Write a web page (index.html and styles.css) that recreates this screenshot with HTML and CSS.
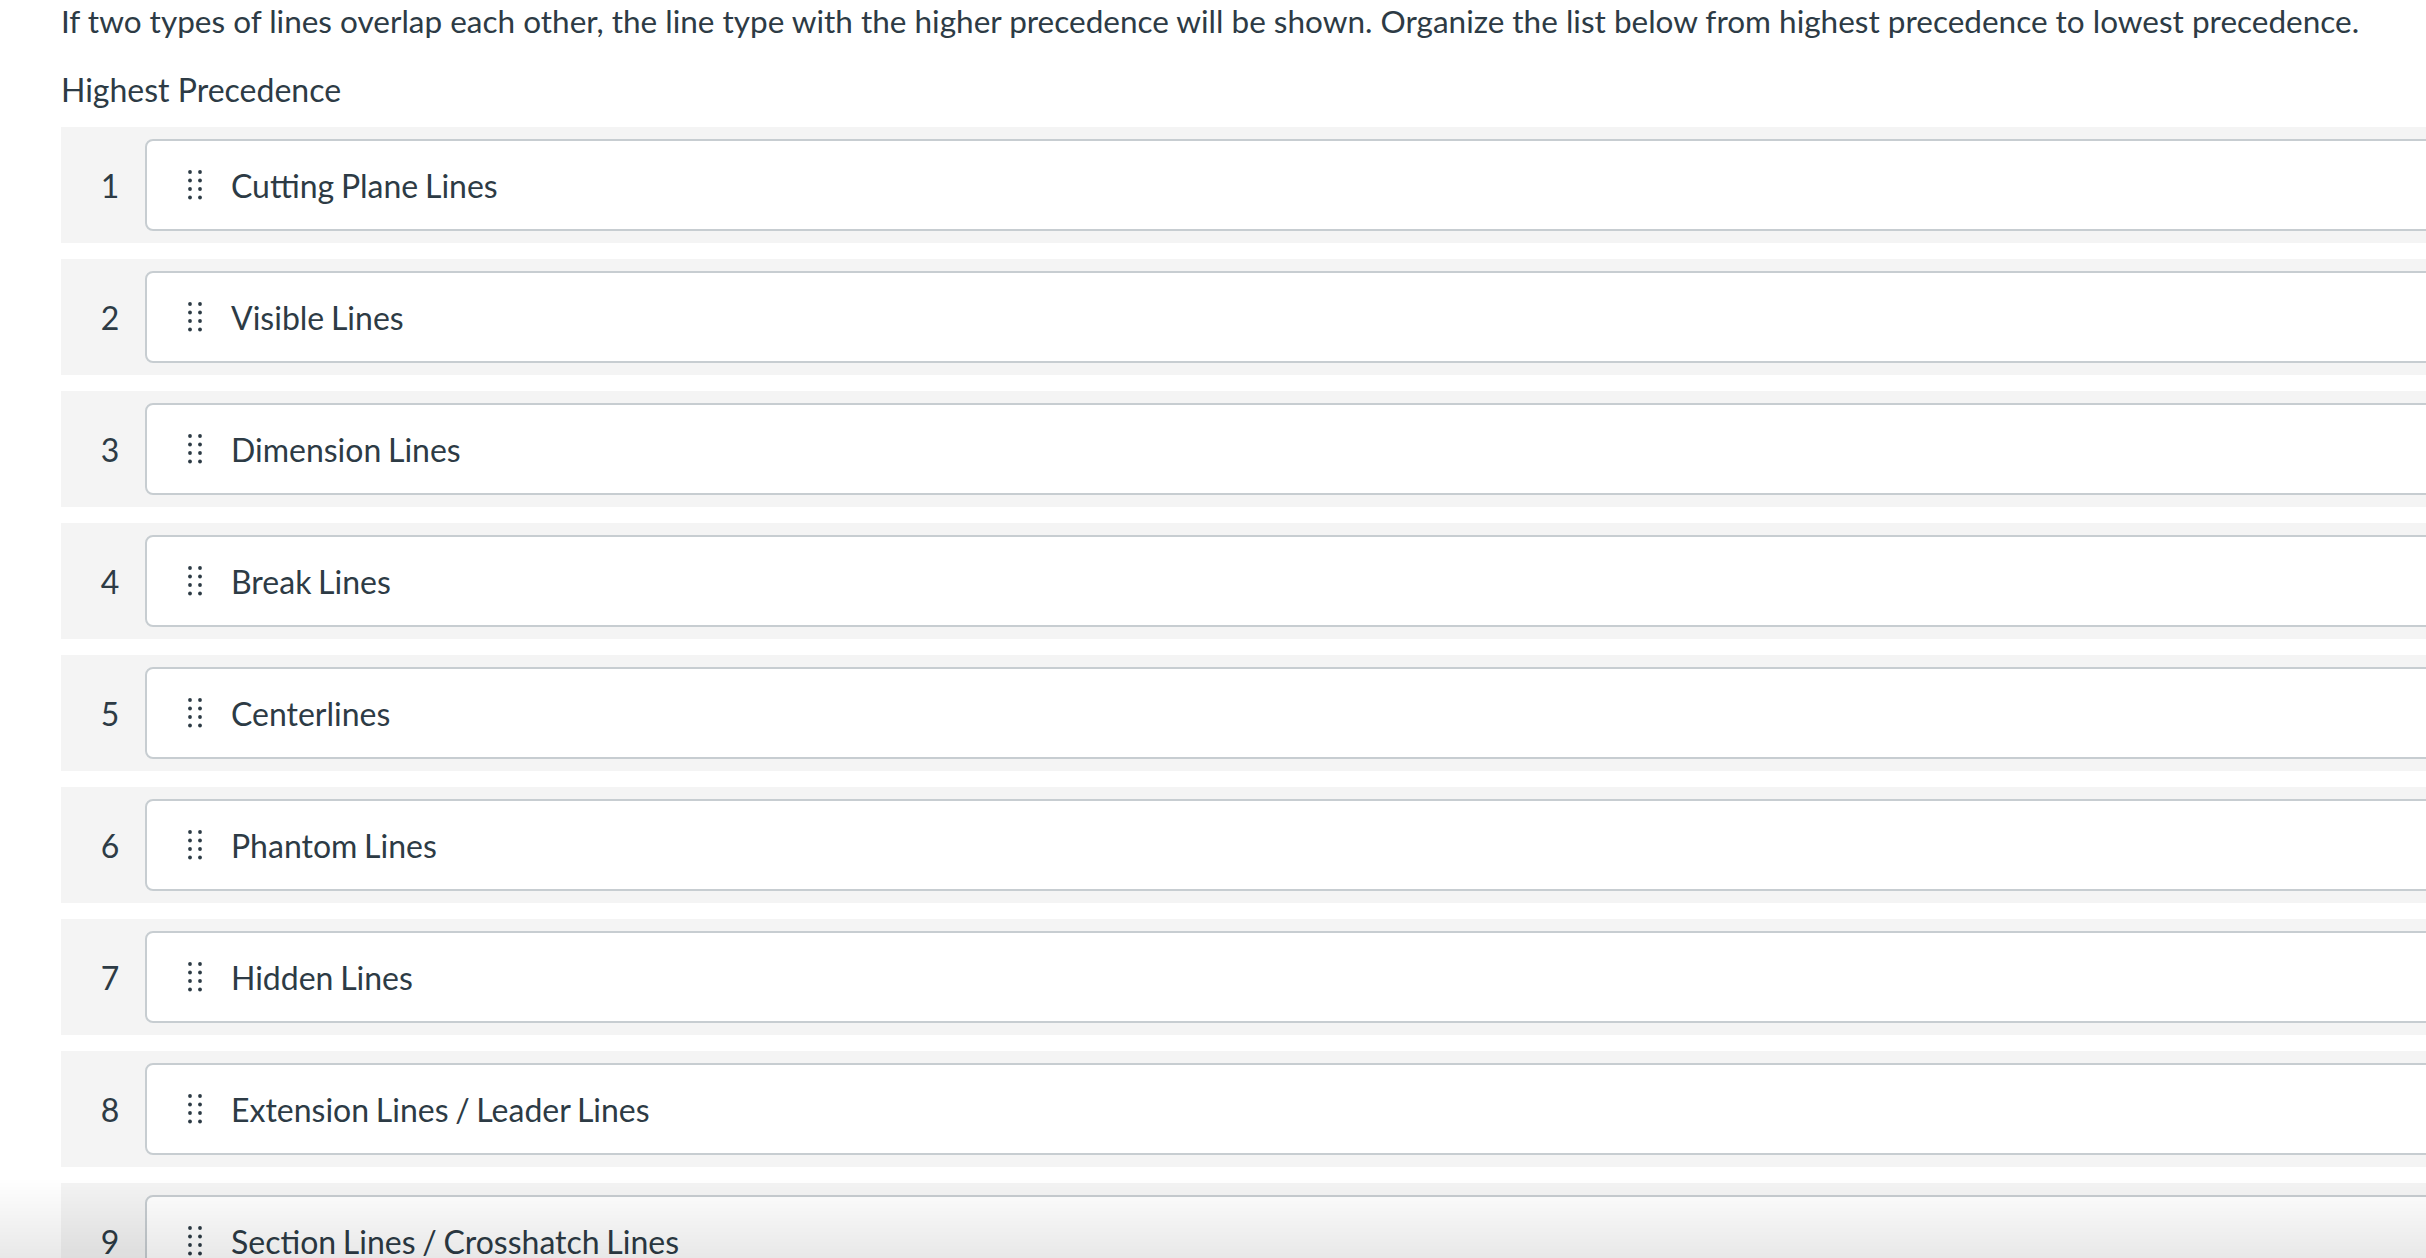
FILE: index.html
```html
<!DOCTYPE html>
<html>
<head>
	<title>Ordering question</title>
	<link rel="stylesheet" href="styles.css">
</head>
<body>
	<div class="question">
		<p class="prompt">If two types of lines overlap each other, the line type with the higher precedence will be shown. Organize the list below from highest precedence to lowest precedence.</p>
		<p class="top-label">Highest Precedence</p>
		<ol class="order-list">
			<li class="order-item">
				<span class="order-num">1</span>
				<div class="order-card">
					<svg class="drag-handle" viewBox="0 0 14 30"><circle cx="2" cy="2" r="1.9"/><circle cx="12" cy="2" r="1.9"/><circle cx="2" cy="10.5" r="1.9"/><circle cx="12" cy="10.5" r="1.9"/><circle cx="2" cy="19" r="1.9"/><circle cx="12" cy="19" r="1.9"/><circle cx="2" cy="27.5" r="1.9"/><circle cx="12" cy="27.5" r="1.9"/></svg>
					<span class="order-text">Cutting Plane Lines</span>
				</div>
			</li>
			<li class="order-item">
				<span class="order-num">2</span>
				<div class="order-card">
					<svg class="drag-handle" viewBox="0 0 14 30"><circle cx="2" cy="2" r="1.9"/><circle cx="12" cy="2" r="1.9"/><circle cx="2" cy="10.5" r="1.9"/><circle cx="12" cy="10.5" r="1.9"/><circle cx="2" cy="19" r="1.9"/><circle cx="12" cy="19" r="1.9"/><circle cx="2" cy="27.5" r="1.9"/><circle cx="12" cy="27.5" r="1.9"/></svg>
					<span class="order-text">Visible Lines</span>
				</div>
			</li>
			<li class="order-item">
				<span class="order-num">3</span>
				<div class="order-card">
					<svg class="drag-handle" viewBox="0 0 14 30"><circle cx="2" cy="2" r="1.9"/><circle cx="12" cy="2" r="1.9"/><circle cx="2" cy="10.5" r="1.9"/><circle cx="12" cy="10.5" r="1.9"/><circle cx="2" cy="19" r="1.9"/><circle cx="12" cy="19" r="1.9"/><circle cx="2" cy="27.5" r="1.9"/><circle cx="12" cy="27.5" r="1.9"/></svg>
					<span class="order-text">Dimension Lines</span>
				</div>
			</li>
			<li class="order-item">
				<span class="order-num">4</span>
				<div class="order-card">
					<svg class="drag-handle" viewBox="0 0 14 30"><circle cx="2" cy="2" r="1.9"/><circle cx="12" cy="2" r="1.9"/><circle cx="2" cy="10.5" r="1.9"/><circle cx="12" cy="10.5" r="1.9"/><circle cx="2" cy="19" r="1.9"/><circle cx="12" cy="19" r="1.9"/><circle cx="2" cy="27.5" r="1.9"/><circle cx="12" cy="27.5" r="1.9"/></svg>
					<span class="order-text">Break Lines</span>
				</div>
			</li>
			<li class="order-item">
				<span class="order-num">5</span>
				<div class="order-card">
					<svg class="drag-handle" viewBox="0 0 14 30"><circle cx="2" cy="2" r="1.9"/><circle cx="12" cy="2" r="1.9"/><circle cx="2" cy="10.5" r="1.9"/><circle cx="12" cy="10.5" r="1.9"/><circle cx="2" cy="19" r="1.9"/><circle cx="12" cy="19" r="1.9"/><circle cx="2" cy="27.5" r="1.9"/><circle cx="12" cy="27.5" r="1.9"/></svg>
					<span class="order-text">Centerlines</span>
				</div>
			</li>
			<li class="order-item">
				<span class="order-num">6</span>
				<div class="order-card">
					<svg class="drag-handle" viewBox="0 0 14 30"><circle cx="2" cy="2" r="1.9"/><circle cx="12" cy="2" r="1.9"/><circle cx="2" cy="10.5" r="1.9"/><circle cx="12" cy="10.5" r="1.9"/><circle cx="2" cy="19" r="1.9"/><circle cx="12" cy="19" r="1.9"/><circle cx="2" cy="27.5" r="1.9"/><circle cx="12" cy="27.5" r="1.9"/></svg>
					<span class="order-text">Phantom Lines</span>
				</div>
			</li>
			<li class="order-item">
				<span class="order-num">7</span>
				<div class="order-card">
					<svg class="drag-handle" viewBox="0 0 14 30"><circle cx="2" cy="2" r="1.9"/><circle cx="12" cy="2" r="1.9"/><circle cx="2" cy="10.5" r="1.9"/><circle cx="12" cy="10.5" r="1.9"/><circle cx="2" cy="19" r="1.9"/><circle cx="12" cy="19" r="1.9"/><circle cx="2" cy="27.5" r="1.9"/><circle cx="12" cy="27.5" r="1.9"/></svg>
					<span class="order-text">Hidden Lines</span>
				</div>
			</li>
			<li class="order-item">
				<span class="order-num">8</span>
				<div class="order-card">
					<svg class="drag-handle" viewBox="0 0 14 30"><circle cx="2" cy="2" r="1.9"/><circle cx="12" cy="2" r="1.9"/><circle cx="2" cy="10.5" r="1.9"/><circle cx="12" cy="10.5" r="1.9"/><circle cx="2" cy="19" r="1.9"/><circle cx="12" cy="19" r="1.9"/><circle cx="2" cy="27.5" r="1.9"/><circle cx="12" cy="27.5" r="1.9"/></svg>
					<span class="order-text">Extension Lines / Leader Lines</span>
				</div>
			</li>
			<li class="order-item">
				<span class="order-num">9</span>
				<div class="order-card">
					<svg class="drag-handle" viewBox="0 0 14 30"><circle cx="2" cy="2" r="1.9"/><circle cx="12" cy="2" r="1.9"/><circle cx="2" cy="10.5" r="1.9"/><circle cx="12" cy="10.5" r="1.9"/><circle cx="2" cy="19" r="1.9"/><circle cx="12" cy="19" r="1.9"/><circle cx="2" cy="27.5" r="1.9"/><circle cx="12" cy="27.5" r="1.9"/></svg>
					<span class="order-text">Section Lines / Crosshatch Lines</span>
				</div>
			</li>
		</ol>
	</div>
	<div class="bottom-shade"></div>
</body>
</html>
```

FILE: styles.css
```css
html,body{
	margin:0;
	padding:0;
	overflow:hidden;
}
body{
	font-family: Lato, "Open Sans", sans-serif;
	font-size:32px;
	color:#2d3b45;
	background-color:#fff;
}
.question{
	padding-left:61px;
	width:2500px;
}
.prompt{
	margin:0;
	font-size:31.5px;
	line-height:42px;
}
.top-label{
	margin:27px 0 16px;
	line-height:42px;
}
.order-list{
	margin:0;
	padding:0;
	list-style:none;
}
.order-item{
	display:flex;
	align-items:center;
	padding:12px 0;
	margin-bottom:16px;
	background-color:#f4f4f4;
}
.order-num{
	box-sizing:border-box;
	width:84px;
	padding-left:14px;
	text-align:center;
}
.order-card{
	flex:1;
	box-sizing:border-box;
	display:flex;
	align-items:center;
	height:92px;
	padding-left:41px;
	background-color:#fff;
	border:2px solid #c7cdd1;
	border-radius:8px;
}
.drag-handle{
	width:14px;
	height:30px;
	margin-right:29px;
	fill:#2d3b45;
}
.order-text{
	word-spacing:-1.5px;
}
/* shadow of the footer bar under the page */
.bottom-shade{
	position:fixed;
	left:0;
	right:0;
	bottom:0;
	height:80px;
	background:linear-gradient(to bottom, rgba(0,0,0,0), rgba(0,0,0,0.09));
	pointer-events:none;
}
```
